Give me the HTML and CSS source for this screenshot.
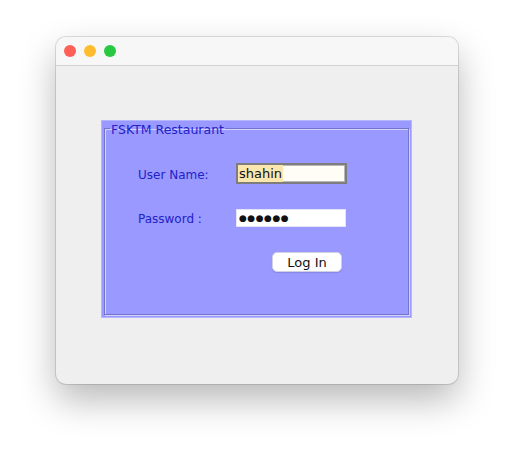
FILE: index.html
```html
<!DOCTYPE html>
<html>
<head>
<meta charset="utf-8">
<link rel="stylesheet" href="styles.css">
</head>
<body>
<div class="window">
  <div class="titlebar">
    <span class="light red"></span>
    <span class="light yellow"></span>
    <span class="light green"></span>
  </div>
  <div class="content">
    <div class="panel">
      <fieldset class="group">
        <legend class="group-title">FSKTM Restaurant</legend>
        <div class="form">
          <label class="label">User Name:</label>
          <div class="field focused"><span class="sel">shahin</span></div>
          <label class="label">Password :</label>
          <div class="field pass">●●●●●●</div>
          <button class="btn">Log In</button>
        </div>
      </fieldset>
    </div>
  </div>
</div>
</body>
</html>
```
FILE: styles.css
```css
html, body {
  margin: 0;
  padding: 0;
  background: #ffffff;
}
body {
  width: 514px;
  height: 459px;
  overflow: hidden;
  font-family: "DejaVu Sans", sans-serif;
}
.window {
  margin: 37px 0 0 56px;
  width: 402px;
  height: 347px;
  border-radius: 10px;
  background: #efefef;
  box-shadow: 0 0 0 1px rgba(0,0,0,0.12), 0 16px 36px rgba(0,0,0,0.28);
  overflow: hidden;
  display: flex;
  flex-direction: column;
}
.titlebar {
  height: 28px;
  flex: none;
  background: #f7f7f7;
  border-bottom: 1px solid #d2d2d2;
  display: flex;
  align-items: center;
  gap: 8px;
  padding-left: 8px;
}
.light {
  width: 12px;
  height: 12px;
  border-radius: 50%;
  display: block;
}
.red { background: #fe5f57; }
.yellow { background: #febc2e; }
.green { background: #28c840; }
.content {
  padding: 54px 0 0 45px;
}
.panel {
  background: #9999ff;
  border: 1px solid #b6b6ff;
  box-sizing: border-box;
  padding: 0 2px 2px 2px;
  width: 311px;
  height: 198px;
  display: flex;
}
.group {
  margin: 0;
  padding: 0;
  flex: 1;
  border: 1px solid #7474cc;
  box-shadow: 1px 1px 0 #d2d2ff, inset 1px 1px 0 #d2d2ff;
}
.group-title {
  margin-left: 5px;
  padding: 2px 1px 0 1px;
  font-size: 12.5px;
  line-height: 13px;
  color: #2222c8;
}
.form {
  display: grid;
  grid-template-columns: 98px 110px;
  align-items: center;
  row-gap: 25px;
  padding: 27px 0 0 33px;
}
.label {
  font-size: 12px;
  line-height: 15px;
  color: #2222c8;
  padding-top: 3px;
}
.field {
  height: 18px;
  background: #ffffff;
  box-sizing: border-box;
  font-size: 13px;
  color: #111;
  display: flex;
  align-items: center;
  padding-left: 2px;
}
.field.focused {
  height: 21px;
  width: 111px;
  border: 2px solid #7d7d7d;
  box-shadow: inset 0 0 0 1px #b8b8b8;
  background: #fffdf6;
  padding-left: 0;
}
.sel {
  background: #fbe6ad;
  height: 100%;
  display: flex;
  align-items: center;
  padding: 0 1px;
}
.pass {
  font-size: 9px;
  letter-spacing: 0.5px;
  border: 1px solid #e4e4f4;
}
.btn {
  grid-column: 2;
  margin: 0 0 0 36px;
  width: 70px;
  height: 20px;
  padding: 0;
  background: #ffffff;
  border: 1px solid #d0d0e4;
  border-radius: 5px;
  box-shadow: 0 1px 1px rgba(0,0,0,0.12);
  font-family: "DejaVu Sans", sans-serif;
  font-size: 13px;
  color: #111;
}
```
